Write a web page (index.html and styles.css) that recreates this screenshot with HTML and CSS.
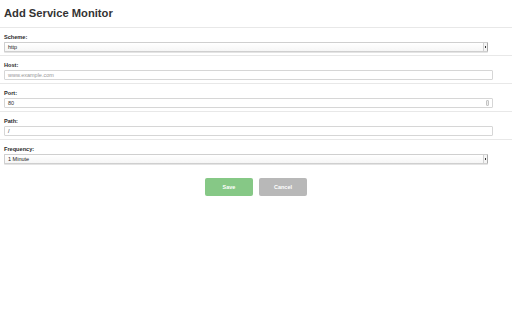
FILE: index.html
```html
<!DOCTYPE html>
<html>
<head>
<meta charset="utf-8">
<title>Add Service Monitor</title>
<link rel="stylesheet" href="styles.css">
</head>
<body>
<div class="page">
  <header class="header"><h1 class="title">Add Service Monitor</h1></header>
  <form class="form">
    <div class="field">
      <label class="label">Scheme:</label>
      <div class="select-wrap"><div class="select">http</div><span class="arrow"></span></div>
    </div>
    <div class="field">
      <label class="label">Host:</label>
      <div class="input placeholder">www.example.com</div>
    </div>
    <div class="field">
      <label class="label">Port:</label>
      <div class="input-wrap"><div class="input">80</div><span class="spin"></span></div>
    </div>
    <div class="field">
      <label class="label">Path:</label>
      <div class="input">/</div>
    </div>
    <div class="field">
      <label class="label">Frequency:</label>
      <div class="select-wrap"><div class="select">1 Minute</div><span class="arrow"></span></div>
    </div>
    <div class="actions">
      <button type="button" class="btn btn-save">Save</button>
      <button type="button" class="btn btn-cancel">Cancel</button>
    </div>
  </form>
</div>
</body>
</html>
```
FILE: styles.css
```css
* { box-sizing: border-box; }
html, body { margin: 0; padding: 0; background: #fff; }
body { font-family: "Liberation Sans", Arial, sans-serif; color: #333; }
.page { width: 512px; height: 310px; }
.header { height: 27px; padding: 6px 4px 0; }
.title { margin: 0; font-size: 11.2px; line-height: 14px; font-weight: bold; color: #333; }
.field { border-top: 1px solid #e8e8e8; padding: 5px 0 3px 4px; height: 28px; }
.label { display: block; font-size: 5.6px; line-height: 8px; font-weight: bold; color: #2a2a2a; margin-bottom: 1px; }
.input { width: 489px; height: 10px; border: 1px solid #d6d6d6; border-radius: 1px; font-size: 5.5px; line-height: 8px; padding: 0 3px; color: #333; background: #fff; }
.placeholder { color: #999; }
.input-wrap, .select-wrap { position: relative; width: 489px; }
.select-wrap { width: 484px; }
.select { width: 484px; height: 10px; border: 1px solid #cfcfcf; border-right-color: #aaa; border-radius: 1px; font-size: 5.5px; line-height: 8px; padding: 0 3px; color: #222; background: linear-gradient(#fff, #f6f6f6); box-shadow: 0 1px 0 #e4e4e4; }
.arrow { position: absolute; right: 1px; top: 1px; width: 4px; height: 8px; border-left: 1px solid #d0d0d0; background: #f4f4f4; }
.arrow::after { content: ""; position: absolute; left: 1px; top: 3px; width: 1px; height: 2px; background: #333; }
.spin { position: absolute; right: 4px; top: 2px; width: 3px; height: 6px; border: 1px solid #c4c4c4; border-radius: 1px; background: #eee; }
.actions { display: flex; justify-content: center; gap: 6px; margin-top: 11px; }
.btn { width: 48px; height: 18px; border: none; border-radius: 2px; color: #fff; font-family: "Liberation Sans", Arial, sans-serif; font-size: 5.5px; font-weight: bold; padding: 0; }
.btn-save { background: #86c886; }
.btn-cancel { background: #b8b8b8; }
```
